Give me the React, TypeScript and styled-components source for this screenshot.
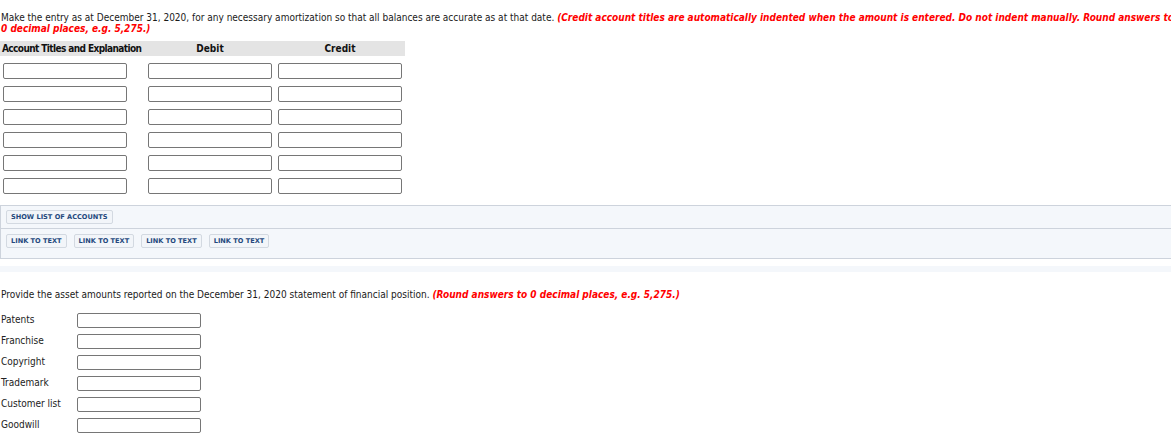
import React from 'react';
import styled, {createGlobalStyle} from 'styled-components';

const GlobalStyle = createGlobalStyle`
  html, body {
    margin: 0;
    padding: 0;
    background: #fff;
    overflow: hidden;
  }
  body {
    font-family: "DejaVu Sans Condensed", "DejaVu Sans", Tahoma, sans-serif;
    font-size: 10px;
    color: #1a1a1a;
  }
`;

const journalRows = [0, 1, 2, 3, 4, 5];
const assets = ['Patents', 'Franchise', 'Copyright', 'Trademark', 'Customer list', 'Goodwill'];

const App: React.FC = () => {
  return (
    <Page>
      <GlobalStyle />
      <Intro>
        <Line>
          Make the entry as at December 31, 2020, for any necessary amortization so that all balances are
          accurate as at that date.{' '}
          <Hint>
            (Credit account titles are automatically indented when the amount is entered. Do not indent
            manually. Round answers to
          </Hint>
        </Line>
        <Line>
          <Hint>0 decimal places, e.g. 5,275.)</Hint>
        </Line>
      </Intro>

      <Journal>
        <HeadCell>Account Titles and Explanation</HeadCell>
        <HeadCell $center>Debit</HeadCell>
        <HeadCell $center>Credit</HeadCell>
        {journalRows.map(i => (
          <React.Fragment key={i}>
            <Cell>
              <Field type="text" />
            </Cell>
            <Cell>
              <Field type="text" />
            </Cell>
            <Cell>
              <Field type="text" />
            </Cell>
          </React.Fragment>
        ))}
      </Journal>

      <Toolbar>
        <ToolRow>
          <ToolButton>Show List of Accounts</ToolButton>
        </ToolRow>
        <ToolRow $last>
          <ToolButton>Link to Text</ToolButton>
          <ToolButton>Link to Text</ToolButton>
          <ToolButton>Link to Text</ToolButton>
          <ToolButton>Link to Text</ToolButton>
        </ToolRow>
      </Toolbar>
      <Divider />

      <Question>
        Provide the asset amounts reported on the December 31, 2020 statement of financial position.{' '}
        <Hint>(Round answers to 0 decimal places, e.g. 5,275.)</Hint>
      </Question>

      <AssetList>
        {assets.map(name => (
          <React.Fragment key={name}>
            <AssetLabel>{name}</AssetLabel>
            <AssetField type="text" />
          </React.Fragment>
        ))}
      </AssetList>
    </Page>
  );
};
export default App;

const Page = styled.div`
  width: 1171px;
  padding-top: 12px;
`;

const Intro = styled.div`
  padding-left: 1px;
  line-height: 11px;
`;

const Line = styled.div`
  white-space: nowrap;
`;

const Hint = styled.span`
  color: #ff0000;
  font-weight: bold;
  font-style: italic;
`;

const Journal = styled.div`
  display: grid;
  grid-template-columns: 145px 130px 130px;
  width: 405px;
  margin-top: 7px;
`;

const HeadCell = styled.div<{$center?: boolean}>`
  background: #e4e4e4;
  height: 15px;
  line-height: 15px;
  font-weight: bold;
  color: #111;
  white-space: nowrap;
  letter-spacing: ${p => (p.$center ? '0' : '-0.6px')};
  padding-left: ${p => (p.$center ? '0' : '2px')};
  text-align: ${p => (p.$center ? 'center' : 'left')};
  margin-bottom: 7px;
`;

const Cell = styled.div`
  padding-left: 3px;
  height: 23px;
`;

const Field = styled.input`
  box-sizing: border-box;
  display: block;
  width: 124px;
  height: 16px;
  margin: 0;
  padding: 0 3px;
  border: 1px solid #767676;
  border-radius: 2px;
  background: #fff;
  font: inherit;
`;

const Toolbar = styled.div`
  margin-top: 4px;
  background: #f4f7fb;
  border: 1px solid #cdd3dc;
  border-right: none;
`;

const ToolRow = styled.div<{$last?: boolean}>`
  display: flex;
  gap: 7px;
  padding: ${p => (p.$last ? '5px 0 10px 5px' : '4px 0 4px 5px')};
  border-top: ${p => (p.$last ? '1px solid #cdd3dc' : 'none')};
`;

const ToolButton = styled.button`
  box-sizing: border-box;
  height: 14px;
  margin: 0;
  padding: 0 4px;
  background: #f2f5f9;
  border: 1px solid #d3d9e1;
  border-radius: 2px;
  color: #24487d;
  font-family: "DejaVu Sans", Verdana, sans-serif;
  font-size: 6.6px;
  font-weight: bold;
  text-transform: uppercase;
  line-height: 12px;
`;

const Divider = styled.div`
  height: 6px;
  margin-top: 7px;
  background: #f4f7fb;
`;

const Question = styled.div`
  margin-top: 17px;
  padding-left: 1px;
  line-height: 11px;
  white-space: nowrap;
`;

const AssetList = styled.div`
  display: grid;
  grid-template-columns: 77px 124px;
  grid-auto-rows: 21px;
  margin-top: 13px;
  align-items: start;
`;

const AssetLabel = styled.div`
  padding-left: 1px;
  padding-top: 1px;
  line-height: 11px;
  color: #222;
`;

const AssetField = styled(Field)`
  height: 15px;
`;
